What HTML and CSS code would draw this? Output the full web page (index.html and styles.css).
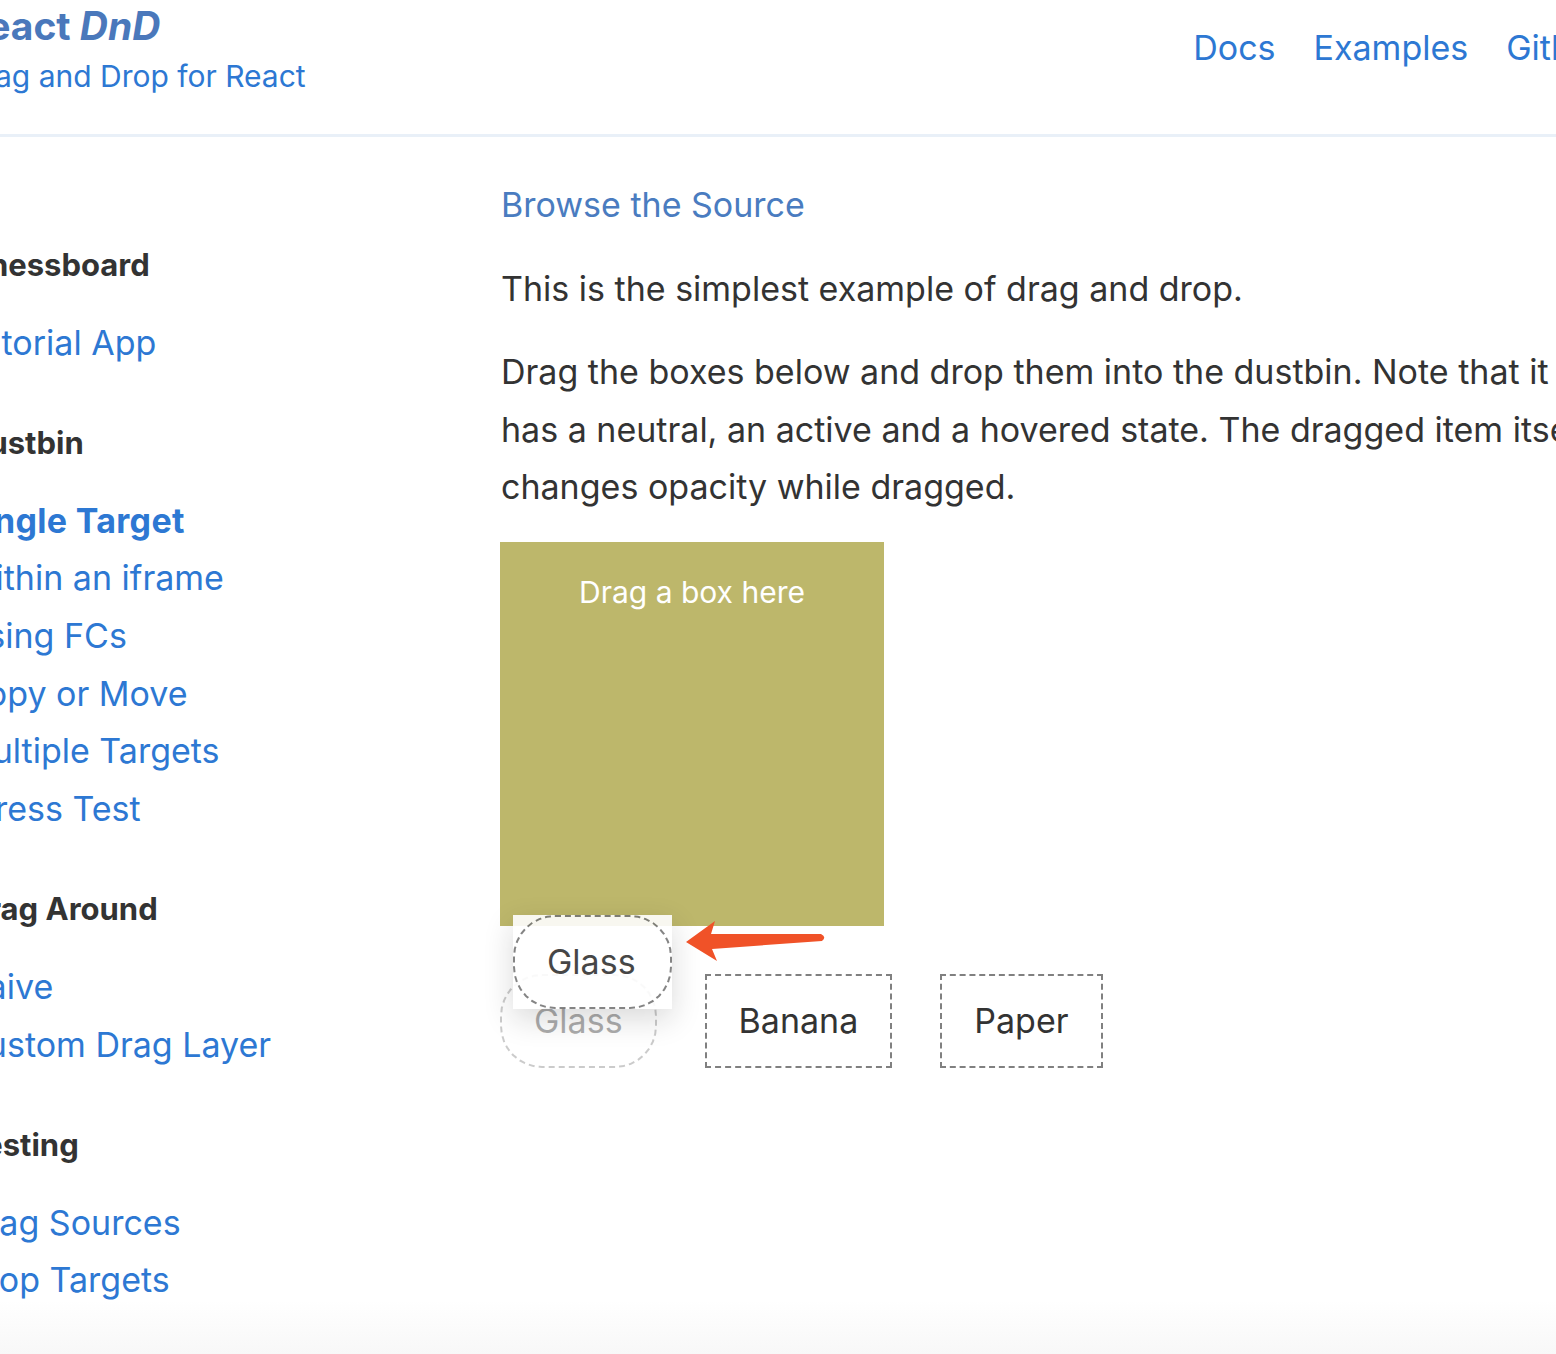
FILE: index.html
```html
<!DOCTYPE html>
<html lang="en">
<head>
    <meta charset="UTF-8">
    <meta name="viewport" content="width=device-width, initial-scale=1.0">
    <title>React DnD - Single Target</title>
    <link rel="stylesheet" href="styles.css">
</head>
<body>
<div class="page">
    <header class="site-header">
        <div class="brand">
            <div class="brand-title">React <em>DnD</em></div>
            <div class="brand-sub">Drag and Drop for React</div>
        </div>
        <nav class="top-nav">
            <a href="#">Docs</a>
            <a href="#">Examples</a>
            <a href="#">Github</a>
        </nav>
    </header>

    <div class="layout">
        <aside class="sidebar">
            <div class="group">
                <h4>Chessboard</h4>
                <ul>
                    <li><a href="#">Tutorial App</a></li>
                </ul>
            </div>
            <div class="group">
                <h4>Dustbin</h4>
                <ul>
                    <li><a href="#" class="active">Single Target</a></li>
                    <li><a href="#">Within an iframe</a></li>
                    <li><a href="#">Using FCs</a></li>
                    <li><a href="#">Copy or Move</a></li>
                    <li><a href="#">Multiple Targets</a></li>
                    <li><a href="#">Stress Test</a></li>
                </ul>
            </div>
            <div class="group">
                <h4>Drag Around</h4>
                <ul>
                    <li><a href="#">Naive</a></li>
                    <li><a href="#">Custom Drag Layer</a></li>
                </ul>
            </div>
            <div class="group">
                <h4>Testing</h4>
                <ul>
                    <li><a href="#">Drag Sources</a></li>
                    <li><a href="#">Drop Targets</a></li>
                </ul>
            </div>
        </aside>

        <main class="content">
            <p><a href="#" class="source-link">Browse the Source</a></p>
            <p>This is the simplest example of drag and drop.</p>
            <p>Drag the boxes below and drop them into the dustbin. Note that it has a neutral, an active and a hovered state. The dragged item itself changes opacity while dragged.</p>

            <div class="example">
                <div class="dustbin">Drag a box here</div>
                <div class="boxes">
                    <div class="box glass dragging">Glass</div>
                    <div class="box">Banana</div>
                    <div class="box">Paper</div>
                </div>

                <!-- drag preview under the cursor -->
                <div class="drag-preview">
                    <div class="box glass">Glass</div>
                </div>

                <svg class="arrow" width="150" height="44" viewBox="0 0 150 44">
                    <path d="M1 23 L30 2 L26 15 L136 15 Q142 18 137 22 L27 30 L32 42 Z" fill="#f05228"/>
                </svg>
            </div>
        </main>
    </div>
</div>
</body>
</html>
```

FILE: styles.css
```css
html {
    background: linear-gradient(to bottom, #fff 1300px, #f8f8f8 1354px) no-repeat;
    min-height: 1354px;
}
body {
    margin: 0;
    overflow: hidden;
    font-family: Inter, "Noto Sans", sans-serif;
    font-size: 34px;
    line-height: 57.6px;
    color: #333;
}
a {
    color: #2d78d3;
    text-decoration: none;
}
.page {
    margin-left: -38px;
    width: 1720px;
}

/* header */
.site-header {
    display: flex;
    justify-content: space-between;
    align-items: flex-start;
    padding: 2px 70px 38px 0;
    border-bottom: 3px solid #e9f0f8;
}
.brand-title {
    font-size: 39px;
    line-height: 48px;
    font-weight: 700;
    color: #4a78bb;
}
.brand-sub {
    margin-top: 6px;
    font-size: 30px;
    line-height: 40px;
    color: #2d78d3;
}
.top-nav {
    display: flex;
    gap: 38px;
    padding-top: 26px;
    font-size: 34px;
    line-height: 40px;
}

/* layout */
.layout {
    display: grid;
    grid-template-columns: 539px 1100px;
}
.sidebar {
    padding-top: 99px;
}
.group {
    margin-bottom: 43px;
}
.sidebar h4 {
    margin: 0 0 20px;
    padding-left: 4px;
    font-size: 31px;
    line-height: 57.6px;
    font-weight: 700;
    color: #333;
}
.sidebar ul {
    list-style: none;
    margin: 0;
    padding: 0;
}
.sidebar li {
    font-size: 34px;
    line-height: 57.6px;
}
.sidebar a.active {
    font-weight: 700;
    letter-spacing: 0.3px;
}

/* content */
.content {
    padding-top: 39px;
}
.content p {
    margin: 0 0 26px;
}
.source-link {
    color: #4a7cc0;
}
.example {
    position: relative;
}
.dustbin {
    width: 384px;
    height: 384px;
    box-sizing: border-box;
    padding: 32px;
    margin-bottom: 48px;
    margin-left: -1px;
    background-color: #bdb76b;
    color: #fff;
    font-size: 30px;
    text-align: center;
    line-height: normal;
}
.boxes {
    display: flex;
    gap: 48px;
    margin-left: -1px;
}
.box {
    border: 2px dashed gray;
    background: #fff;
    padding: 16px 32px;
}
.glass {
    border-radius: 42px;
}
.dragging {
    opacity: 0.4;
}

/* overlays: drag layer and annotation */
.drag-preview {
    position: absolute;
    left: 12px;
    top: 373px;
    width: 159px;
    background: #fff;
    opacity: 0.9;
    box-shadow: 0 10px 28px rgba(0, 0, 0, 0.16);
}
.drag-preview .box {
    border-color: #777;
}
.arrow {
    position: absolute;
    left: 184px;
    top: 377px;
}
```
